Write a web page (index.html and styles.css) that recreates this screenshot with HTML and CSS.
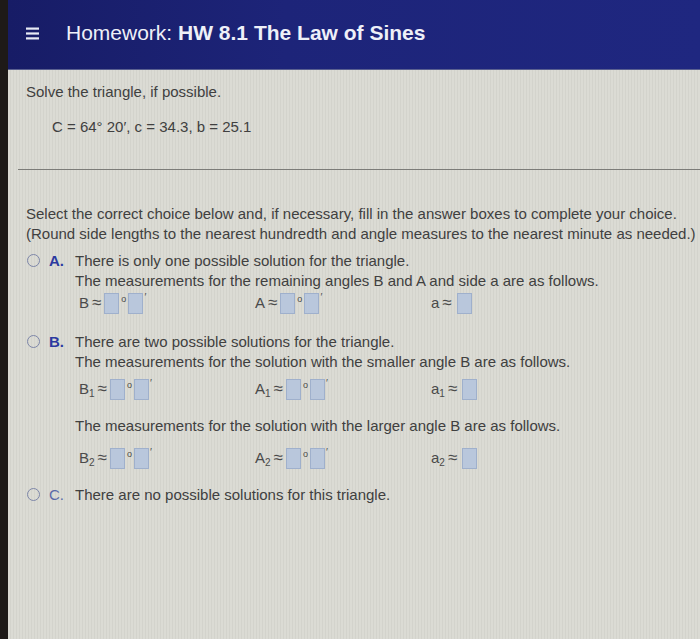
FILE: index.html
```html
<!DOCTYPE html>
<html>
<head>
<meta charset="utf-8">
<link rel="stylesheet" href="styles.css">
</head>
<body>
<div class="screen">
  <header class="topbar">
    <svg class="menu" width="13" height="13" viewBox="0 0 13 13"><rect x="0" y="0.5" width="13" height="2.2" fill="#e8ebf5"/><rect x="0" y="5.4" width="13" height="2.2" fill="#e8ebf5"/><rect x="0" y="10.3" width="13" height="2.2" fill="#e8ebf5"/></svg>
    <h1 class="title">Homework: <b>HW 8.1 The Law of Sines</b></h1>
  </header>
  <section class="question">
    <p class="prompt">Solve the triangle, if possible.</p>
    <p class="given">C = 64° 20′, c = 34.3, b = 25.1</p>
  </section>
  <div class="divider"></div>
  <section class="answer">
    <p class="instr">Select the correct choice below and, if necessary, fill in the answer boxes to complete your choice.<br>(Round side lengths to the nearest hundredth and angle measures to the nearest minute as needed.)</p>

    <div class="choice choice-a">
      <span class="radio"></span><span class="letter">A.</span>
      <div class="body">
        <div class="line">There is only one possible solution for the triangle.</div>
        <div class="line">The measurements for the remaining angles B and A and side a are as follows.</div>
        <div class="row row-a">
          <div class="cell"><span class="var">B</span><span class="approx">≈</span><span class="box"></span><span class="deg">o</span><span class="box"></span><span class="prime">′</span></div>
          <div class="cell"><span class="var">A</span><span class="approx">≈</span><span class="box"></span><span class="deg">o</span><span class="box"></span><span class="prime">′</span></div>
          <div class="cell cell-side"><span class="var">a</span><span class="approx">≈</span><span class="box"></span></div>
        </div>
      </div>
    </div>

    <div class="choice choice-b">
      <span class="radio"></span><span class="letter">B.</span>
      <div class="body">
        <div class="line">There are two possible solutions for the triangle.</div>
        <div class="line">The measurements for the solution with the smaller angle B are as follows.</div>
        <div class="row row-b1">
          <div class="cell"><span class="var">B<sub>1</sub></span><span class="approx">≈</span><span class="box"></span><span class="deg">o</span><span class="box"></span><span class="prime">′</span></div>
          <div class="cell"><span class="var">A<sub>1</sub></span><span class="approx">≈</span><span class="box"></span><span class="deg">o</span><span class="box"></span><span class="prime">′</span></div>
          <div class="cell cell-side"><span class="var">a<sub>1</sub></span><span class="approx">≈</span><span class="box"></span></div>
        </div>
        <div class="line line-larger">The measurements for the solution with the larger angle B are as follows.</div>
        <div class="row row-b2">
          <div class="cell"><span class="var">B<sub>2</sub></span><span class="approx">≈</span><span class="box"></span><span class="deg">o</span><span class="box"></span><span class="prime">′</span></div>
          <div class="cell"><span class="var">A<sub>2</sub></span><span class="approx">≈</span><span class="box"></span><span class="deg">o</span><span class="box"></span><span class="prime">′</span></div>
          <div class="cell cell-side"><span class="var">a<sub>2</sub></span><span class="approx">≈</span><span class="box"></span></div>
        </div>
      </div>
    </div>

    <div class="choice choice-c">
      <span class="radio"></span><span class="letter">C.</span>
      <div class="body">
        <div class="line">There are no possible solutions for this triangle.</div>
      </div>
    </div>
  </section>
</div>
</body>
</html>
```
FILE: styles.css
```css
html, body {
  margin: 0;
  padding: 0;
}
body {
  width: 700px;
  height: 639px;
  overflow: hidden;
  background: #d9d9d2;
  font-family: "Liberation Sans", Arial, sans-serif;
  color: #404040;
}
.screen {
  height: 639px;
  border-left: 8px solid #1e1a18;
  background: repeating-linear-gradient(90deg, #dbdbd4 0, #dbdbd4 2px, #d3d3cc 2px, #d3d3cc 3px);
  box-sizing: border-box;
}
.topbar {
  height: 70px;
  display: flex;
  align-items: center;
  background: linear-gradient(90deg, #171c66 0%, #1d2479 40%, #1f2780 100%);
  border-bottom: 1px solid #5a6090;
  box-sizing: border-box;
  padding-left: 18px;
}
.menu {
  display: block;
  margin-top: -2px;
}
.title {
  margin: -3px 0 0 27px;
  font-size: 21px;
  font-weight: normal;
  color: #eef0f8;
  letter-spacing: 0;
}
.title b {
  font-weight: bold;
}
.question {
  padding: 12px 0 0 18px;
}
.prompt, .given {
  margin: 0;
  font-size: 15px;
  line-height: 20px;
}
.given {
  margin-top: 15px;
  padding-left: 26px;
}
.divider {
  margin: 32px 0 0 10px;
  height: 1px;
  background: #7c7c78;
}
.answer {
  padding: 34px 0 0 18px;
  font-size: 15px;
  line-height: 20px;
}
.instr {
  margin: 0;
  white-space: nowrap;
}
.choice {
  display: flex;
  align-items: flex-start;
  margin-top: 7px;
}
.radio {
  width: 11px;
  height: 11px;
  border: 1.5px solid #7d86a8;
  border-radius: 50%;
  margin: 3px 0 0 1px;
  flex: none;
}
.letter {
  width: 26px;
  margin-left: 9px;
  font-weight: bold;
  color: #2c3aa0;
  flex: none;
}
.choice-c .letter {
  font-weight: normal;
  color: #5a6aa8;
}
.body {
  flex: 1;
}
.line {
  white-space: nowrap;
}
.row {
  display: grid;
  grid-template-columns: 176px 176px 100px;
  height: 24px;
  align-items: center;
  margin-left: 4px;
}
.row-a { margin-top: 0; }
.choice-b { margin-top: 17px; }
.row-b1 { margin-top: 5px; }
.line-larger { margin-top: 15px; }
.row-b2 { margin-top: 10px; }
.choice-c { margin-top: 15px; }
.cell {
  display: flex;
  align-items: center;
}
.cell-side .box { margin-left: 2px; }
.var {
  color: #4a4a4a;
}
.var sub {
  font-size: 10px;
  vertical-align: -3px;
  line-height: 0;
}
.approx {
  margin: 0 3px 0 3px;
  font-size: 17px;
  color: #4a4a4a;
}
.box {
  display: inline-block;
  width: 13px;
  height: 19px;
  background: #b9c7dc;
  border: 1px solid #9fb0cc;
}
.deg {
  font-size: 9px;
  line-height: 9px;
  align-self: flex-start;
  margin: 2px 2px 0 2px;
  color: #4a4a4a;
}
.prime {
  font-size: 10px;
  line-height: 10px;
  align-self: flex-start;
  margin: 0 0 0 1px;
  color: #4a4a4a;
}
```
